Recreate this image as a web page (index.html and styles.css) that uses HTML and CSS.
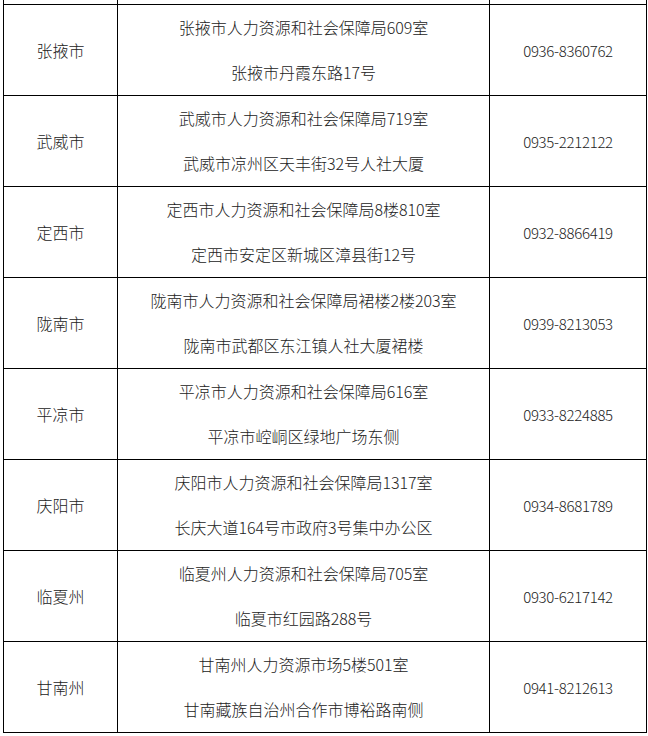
FILE: index.html
```html
<!DOCTYPE html>
<html lang="zh-CN">
<head>
<meta charset="utf-8">
<title>人社部门联系方式</title>
<link rel="stylesheet" href="styles.css">
</head>
<body>
<table class="grid">
  <colgroup>
    <col class="c-city">
    <col class="c-addr">
    <col class="c-tel">
  </colgroup>
  <tr class="stub"><td></td><td></td><td></td></tr>
  <tr>
    <td class="city">张掖市</td>
    <td class="addr"><div class="ln">张掖市人力资源和社会保障局609室</div><div class="ln">张掖市丹霞东路17号</div></td>
    <td class="tel">0936-8360762</td>
  </tr>
  <tr>
    <td class="city">武威市</td>
    <td class="addr"><div class="ln">武威市人力资源和社会保障局719室</div><div class="ln">武威市凉州区天丰街32号人社大厦</div></td>
    <td class="tel">0935-2212122</td>
  </tr>
  <tr>
    <td class="city">定西市</td>
    <td class="addr"><div class="ln">定西市人力资源和社会保障局8楼810室</div><div class="ln">定西市安定区新城区漳县街12号</div></td>
    <td class="tel">0932-8866419</td>
  </tr>
  <tr>
    <td class="city">陇南市</td>
    <td class="addr"><div class="ln">陇南市人力资源和社会保障局裙楼2楼203室</div><div class="ln">陇南市武都区东江镇人社大厦裙楼</div></td>
    <td class="tel">0939-8213053</td>
  </tr>
  <tr>
    <td class="city">平凉市</td>
    <td class="addr"><div class="ln">平凉市人力资源和社会保障局616室</div><div class="ln">平凉市崆峒区绿地广场东侧</div></td>
    <td class="tel">0933-8224885</td>
  </tr>
  <tr>
    <td class="city">庆阳市</td>
    <td class="addr"><div class="ln">庆阳市人力资源和社会保障局1317室</div><div class="ln">长庆大道164号市政府3号集中办公区</div></td>
    <td class="tel">0934-8681789</td>
  </tr>
  <tr>
    <td class="city">临夏州</td>
    <td class="addr"><div class="ln">临夏州人力资源和社会保障局705室</div><div class="ln">临夏市红园路288号</div></td>
    <td class="tel">0930-6217142</td>
  </tr>
  <tr>
    <td class="city">甘南州</td>
    <td class="addr"><div class="ln">甘南州人力资源市场5楼501室</div><div class="ln">甘南藏族自治州合作市博裕路南侧</div></td>
    <td class="tel">0941-8212613</td>
  </tr>
</table>
</body>
</html>
```
FILE: styles.css
```css
html, body {
  margin: 0;
  padding: 0;
  background: #ffffff;
}

body {
  font-family: "Noto Sans CJK SC", "Noto Sans", sans-serif;
  font-size: 16px;
  font-weight: 300;
  color: #222222;
}

.grid {
  margin-left: 3px;
  border-collapse: collapse;
  table-layout: fixed;
  width: 643px;
}

.c-city { width: 114px; }
.c-addr { width: 372px; }
.c-tel { width: 157px; }

.grid td {
  border: 1px solid #000000;
  padding: 0;
  text-align: center;
  vertical-align: middle;
  white-space: nowrap;
}

.stub td {
  border-top: none;
  height: 4px;
}

.ln {
  line-height: 45px;
  height: 45px;
}

.city {
  height: 90px;
}

.tel {
  font-size: 15px;
  letter-spacing: -0.3px;
}
```
